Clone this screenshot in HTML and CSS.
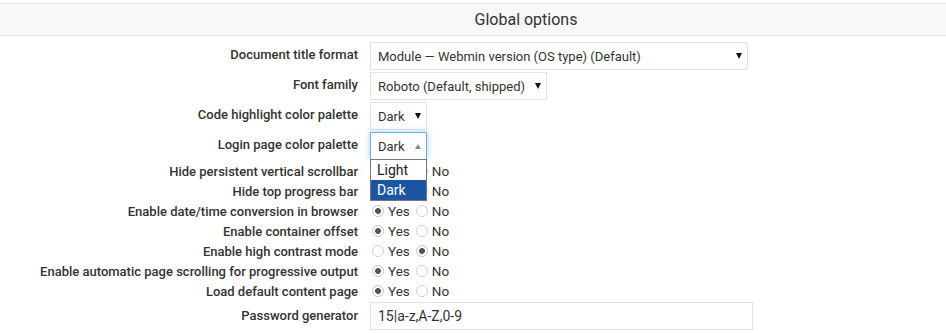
FILE: index.html
```html
<!DOCTYPE html>
<html lang="en">
  <head>
    <meta charset="UTF-8" />
    <title>Global options</title>
    <link rel="stylesheet" href="styles.css">
  </head>
  <body>
    <div class="panel-head">Global options</div>
    <div class="options">
      <div class="row row-sel">
        <div class="lbl">Document title format</div>
        <div class="select w-wide"><span>Module — Webmin version (OS type) (Default)</span><i class="arrow"></i></div>
      </div>
      <div class="row row-sel">
        <div class="lbl">Font family</div>
        <div class="select w-font"><span>Roboto (Default, shipped)</span><i class="arrow"></i></div>
      </div>
      <div class="row row-sel">
        <div class="lbl">Code highlight color palette</div>
        <div class="select w-small"><span>Dark</span><i class="arrow"></i></div>
      </div>
      <div class="row row-sel">
        <div class="lbl">Login page color palette</div>
        <div class="select-wrap">
          <div class="select w-small focus"><span>Dark</span><i class="arrow up"></i></div>
          <ul class="dropdown">
            <li>Light</li>
            <li class="picked">Dark</li>
          </ul>
        </div>
      </div>
      <div class="row row-radio">
        <div class="lbl">Hide persistent vertical scrollbar</div>
        <div class="radios">
          <input type="radio" name="r1" checked><label>Yes</label>
          <input type="radio" name="r1"><label>No</label>
        </div>
      </div>
      <div class="row row-radio">
        <div class="lbl">Hide top progress bar</div>
        <div class="radios">
          <input type="radio" name="r2" checked><label>Yes</label>
          <input type="radio" name="r2"><label>No</label>
        </div>
      </div>
      <div class="row row-radio">
        <div class="lbl">Enable date/time conversion in browser</div>
        <div class="radios">
          <input type="radio" name="r3" checked><label>Yes</label>
          <input type="radio" name="r3"><label>No</label>
        </div>
      </div>
      <div class="row row-radio">
        <div class="lbl">Enable container offset</div>
        <div class="radios">
          <input type="radio" name="r4" checked><label>Yes</label>
          <input type="radio" name="r4"><label>No</label>
        </div>
      </div>
      <div class="row row-radio">
        <div class="lbl">Enable high contrast mode</div>
        <div class="radios">
          <input type="radio" name="r5"><label>Yes</label>
          <input type="radio" name="r5" checked><label>No</label>
        </div>
      </div>
      <div class="row row-radio">
        <div class="lbl">Enable automatic page scrolling for progressive output</div>
        <div class="radios">
          <input type="radio" name="r6" checked><label>Yes</label>
          <input type="radio" name="r6"><label>No</label>
        </div>
      </div>
      <div class="row row-radio">
        <div class="lbl">Load default content page</div>
        <div class="radios">
          <input type="radio" name="r7" checked><label>Yes</label>
          <input type="radio" name="r7"><label>No</label>
        </div>
      </div>
      <div class="row row-input">
        <div class="lbl">Password generator</div>
        <input class="text" type="text" value="15|a-z,A-Z,0-9">
      </div>
    </div>
  </body>
</html>
```

FILE: styles.css
```css
* {
  margin: 0;
  padding: 0;
  box-sizing: border-box;
}
body {
  font-family: Roboto, "Noto Sans", sans-serif;
  font-size: 13px;
  color: #333;
  background: #fff;
}
.panel-head {
  margin-top: 3px;
  height: 33px;
  border-top: 1px solid #e3e3e3;
  border-bottom: 1px solid #e3e3e3;
  background: #f8f8f8;
  display: flex;
  align-items: center;
  justify-content: center;
  padding-left: 106px;
  font-size: 16px;
}
.options {
  padding-top: 5px;
}
.row {
  display: flex;
  align-items: center;
}
.row-sel {
  height: 30px;
}
.row-sel .lbl {
  padding-bottom: 4px;
}
.row-radio {
  height: 20px;
}
.row-input {
  height: 32px;
  margin-top: -1px;
}
.row-input .lbl {
  padding-bottom: 2px;
}
.lbl {
  width: 358px;
  margin-right: 12px;
  text-align: right;
  font-weight: 500;
}
.select {
  height: 28px;
  border: 1px solid #e2e2e2;
  background: #fff;
  padding: 0 5px 0 7px;
  display: flex;
  align-items: center;
  justify-content: space-between;
}
.w-wide {
  width: 378px;
}
.w-font {
  width: 177px;
}
.w-small {
  width: 57px;
}
.arrow {
  width: 0;
  height: 0;
  border-left: 3.5px solid transparent;
  border-right: 3.5px solid transparent;
  border-top: 6px solid #111;
}
.arrow.up {
  border-top: 0;
  border-bottom: 5px solid #888;
}
.select.focus {
  border-color: #66afe9;
  box-shadow: 0 0 6px rgba(102, 175, 233, 0.6);
}
.select-wrap {
  position: relative;
}
.dropdown {
  position: absolute;
  top: 27px;
  left: 0;
  width: 57px;
  list-style: none;
  background: #fff;
  border: 1px solid #767676;
  z-index: 5;
}
.dropdown li {
  height: 20px;
  line-height: 20px;
  padding-left: 6px;
  font-size: 14px;
  color: #222;
}
.dropdown li.picked {
  background: #1c55a2;
  color: #fff;
}
.radios {
  display: flex;
  align-items: center;
  font-size: 13.5px;
}
.radios input {
  appearance: none;
  -webkit-appearance: none;
  width: 12px;
  height: 12px;
  border: 1px solid #cfcfcf;
  border-radius: 50%;
  background: #fff;
  margin: 0 4px 0 2px;
}
.radios input:checked {
  background: radial-gradient(circle, #555 0 2.6px, #fff 3.2px);
  border-color: #c4c4c4;
}
.radios label + input {
  margin-left: 6px;
}
.text {
  width: 383px;
  height: 28px;
  border: 1px solid #e2e2e2;
  padding-left: 7px;
  font-family: Roboto, "Noto Sans", sans-serif;
  font-size: 14px;
  color: #333;
  outline: none;
}
```
